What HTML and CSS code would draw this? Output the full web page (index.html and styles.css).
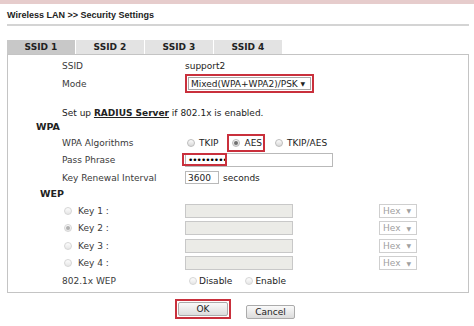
FILE: index.html
```html
<!DOCTYPE html>
<html lang="en">

<head>
    <meta charset="UTF-8">
    <title>Wireless LAN Security Settings</title>
    <link rel="stylesheet" href="styles.css">
</head>

<body>
    <div class="topbar"></div>
    <div class="page">
        <h1 class="title">Wireless LAN &gt;&gt; Security Settings</h1>

        <div class="tabs">
            <div class="tab active">SSID 1</div>
            <div class="tab">SSID 2</div>
            <div class="tab">SSID 3</div>
            <div class="tab">SSID 4</div>
        </div>

        <div class="panel">
            <div class="row h-16">
                <span class="label">SSID</span>
                <span class="value">support2</span>
            </div>
            <div class="row h-16">
                <span class="label">Mode</span>
                <div class="value">
                    <span class="mark mark-select">
                        <span class="select mode">Mixed(WPA+WPA2)/PSK<i class="arrow">&#9660;</i></span>
                    </span>
                </div>
            </div>

            <div class="note">Set up <a href="#">RADIUS Server</a> if 802.1x is enabled.</div>
            <div class="section">WPA</div>

            <div class="row h-17">
                <span class="label">WPA Algorithms</span>
                <div class="value opts">
                    <label class="opt"><input type="radio" name="alg">TKIP</label>
                    <span class="mark mark-opt">
                        <label class="opt"><input type="radio" name="alg" checked>AES</label>
                    </span>
                    <label class="opt tkipaes"><input type="radio" name="alg">TKIP/AES</label>
                </div>
            </div>
            <div class="row h-18">
                <span class="label">Pass Phrase</span>
                <div class="value">
                    <span class="pass-wrap">
                        <input class="text pass" type="password" value="123456789">
                        <span class="mark-over"></span>
                    </span>
                </div>
            </div>
            <div class="row h-17">
                <span class="label">Key Renewal Interval</span>
                <div class="value">
                    <input class="text renew" type="text" value="3600"><span class="unit">seconds</span>
                </div>
            </div>

            <div class="section wep">WEP</div>

            <div class="row key h-17">
                <label class="key-label"><input type="radio" name="key" disabled>Key 1 :</label>
                <input class="text keyin" type="text" disabled>
                <span class="select hex">Hex<i class="arrow">&#9660;</i></span>
            </div>
            <div class="row key h-18">
                <label class="key-label"><input type="radio" name="key" checked disabled>Key 2 :</label>
                <input class="text keyin" type="text" disabled>
                <span class="select hex">Hex<i class="arrow">&#9660;</i></span>
            </div>
            <div class="row key h-17">
                <label class="key-label"><input type="radio" name="key" disabled>Key 3 :</label>
                <input class="text keyin" type="text" disabled>
                <span class="select hex">Hex<i class="arrow">&#9660;</i></span>
            </div>
            <div class="row key h-18">
                <label class="key-label"><input type="radio" name="key" disabled>Key 4 :</label>
                <input class="text keyin" type="text" disabled>
                <span class="select hex">Hex<i class="arrow">&#9660;</i></span>
            </div>
            <div class="row h-18">
                <span class="label">802.1x WEP</span>
                <div class="value opts wep-opts">
                    <label class="opt"><input type="radio" name="wep" disabled>Disable</label>
                    <label class="opt"><input type="radio" name="wep" disabled>Enable</label>
                </div>
            </div>
        </div>

        <div class="buttons">
            <span class="mark mark-btn"><button class="btn">OK</button></span>
            <button class="btn cancel">Cancel</button>
        </div>
    </div>
</body>

</html>
```

FILE: styles.css
```css
* {
    margin: 0;
    padding: 0;
    box-sizing: border-box;
}

body {
    background: #fff;
    font-family: "DejaVu Sans", Verdana, sans-serif;
    font-size: 9px;
    color: #3a3a3a;
}

.topbar {
    height: 4px;
    background-color: #e6cccc;
}

.page {
    padding-left: 7px;
    width: 469px;
}

.title {
    font-family: "Liberation Sans", Arial, sans-serif;
    font-size: 9px;
    font-weight: bold;
    color: #222;
    line-height: 13px;
    padding-top: 5px;
    padding-bottom: 2px;
    border-bottom: 2px solid #d4d4d4;
}

/* tabs */
.tabs {
    display: flex;
    gap: 1px;
    margin-top: 14px;
}

.tab {
    width: 68px;
    height: 14px;
    line-height: 14px;
    text-align: center;
    font-weight: bold;
    color: #222;
    background-color: #e3e3e3;
}

.tab.active {
    background-color: #c8c8c8;
}

/* panel */
.panel {
    border: 1px solid #c4c4c4;
    padding: 3px 0 2px;
}

.row {
    display: grid;
    grid-template-columns: 177px 1fr;
    align-items: center;
}

.h-16 {
    height: 16px;
}

.h-17 {
    height: 17px;
}

.h-18 {
    height: 18px;
}

.label {
    padding-left: 54px;
}

.value {
    color: #222;
    display: flex;
    align-items: center;
}

.note {
    margin-top: 16px;
    height: 14px;
    line-height: 14px;
    padding-left: 54px;
    color: #222;
}

.note a {
    color: #222;
    font-weight: bold;
}

.section {
    height: 14px;
    line-height: 14px;
    padding-left: 28px;
    font-weight: bold;
    font-size: 9.5px;
    color: #222;
}

.section.wep {
    height: 16px;
    line-height: 16px;
    padding-left: 32px;
}

/* red highlight boxes */
.mark {
    display: inline-flex;
    align-items: center;
    border: 2px solid #c9303c;
}

.mark-select {
    padding: 1px;
}

.mark-opt {
    height: 18px;
    padding: 0 1px 0 3px;
    margin-left: 9px;
}

.mark-btn {
    padding: 1px;
}

/* fake selects */
.select {
    display: inline-flex;
    align-items: center;
    justify-content: space-between;
    background: #fff;
    border: 1px solid #a9a9a9;
    color: #222;
}

.select .arrow {
    font-style: normal;
    font-size: 6px;
}

.mode {
    width: 123px;
    height: 13px;
    padding: 0 5px 0 2px;
}

.hex {
    width: 38px;
    height: 14px;
    margin-left: 86px;
    padding: 0 5px 0 3px;
    border-color: #cfcfcf;
    color: #a0a0a0;
}

/* radios */
input[type="radio"] {
    appearance: none;
    width: 8px;
    height: 8px;
    border-radius: 50%;
    border: 1px solid #bdbdbd;
    background: linear-gradient(#fcfcfc, #d8d8d8);
    margin-right: 4px;
    position: relative;
}

input[type="radio"]:checked::after {
    content: "";
    position: absolute;
    left: 1px;
    top: 1px;
    width: 4px;
    height: 4px;
    border-radius: 50%;
    background-color: #6f6f6f;
}

input[type="radio"]:disabled {
    border-color: #d6d6d6;
    background: linear-gradient(#fdfdfd, #e6e6e6);
}

input[type="radio"]:disabled:checked::after {
    background-color: #b0b0b0;
}

.opt {
    display: inline-flex;
    align-items: center;
    color: #222;
}

.opts > .opt:first-child {
    margin-left: 2px;
}

.tkipaes {
    margin-left: 10px;
}

.wep-opts .opt:first-child {
    margin-left: 4px;
}

.wep-opts input[type="radio"] {
    margin-right: 2px;
}

.wep-opts .opt + .opt {
    margin-left: 13px;
}

/* text inputs */
.text {
    font-family: "DejaVu Sans", Verdana, sans-serif;
    font-size: 9px;
    color: #222;
    border: 1px solid #b9b9b9;
    padding: 0 2px;
    background: #fff;
    outline: none;
}

.pass-wrap {
    position: relative;
    display: inline-block;
}

.pass {
    width: 148px;
    height: 14px;
    font-size: 9px;
    letter-spacing: -1px;
    color: #000;
}

.mark-over {
    position: absolute;
    left: -3px;
    top: 0;
    width: 45px;
    height: 13px;
    border: 2px solid #c9303c;
}

.renew {
    width: 34px;
    height: 13px;
}

.unit {
    margin-left: 4px;
}

/* WEP keys */
.row.key {
    grid-template-columns: 177px 108px auto;
    justify-content: start;
}

.key-label {
    display: flex;
    align-items: center;
    padding-left: 56px;
}

.key-label input[type="radio"] {
    margin-right: 6px;
}

.keyin {
    width: 108px;
    height: 14px;
    background-color: #ebebe7;
    border-color: #c8c8c8;
}

/* buttons */
.buttons {
    display: flex;
    align-items: flex-start;
    gap: 15px;
    padding-left: 168px;
    margin-top: 6px;
}

.btn {
    width: 50px;
    height: 14px;
    font-family: "DejaVu Sans", Verdana, sans-serif;
    font-size: 9px;
    color: #222;
    border: 1px solid #ababab;
    border-radius: 2px;
    background: linear-gradient(#fafafa, #dcdcdc);
}

.cancel {
    width: 49px;
    margin-top: 6px;
}
```
